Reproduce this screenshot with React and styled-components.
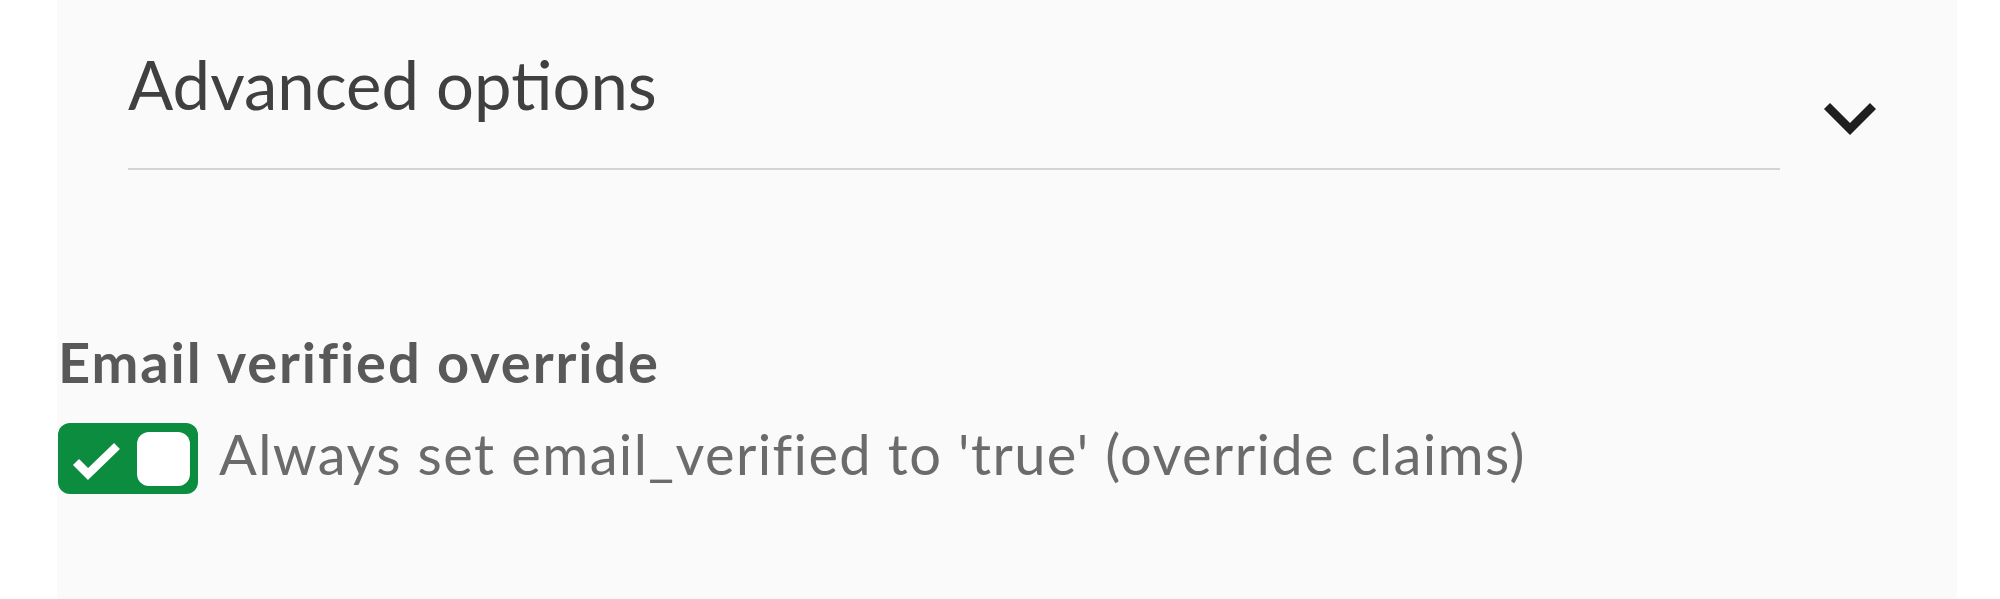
import styled, { createGlobalStyle } from "styled-components";

const GlobalStyle = createGlobalStyle`
    html, body {
        margin: 0;
        padding: 0;
        background: #ffffff;
    }
    body {
        font-family: Lato, "Noto Sans", sans-serif;
    }
`

const Page = styled.div`
    display: flex;
    height: 599px;
    padding-left: 57px;
`

const Panel = styled.section`
    width: 1900px;
    height: 599px;
    background-color: #fafafa;
    display: flex;
    flex-direction: column;
`

const Header = styled.div`
    display: flex;
    padding-left: 71px;
`

const HeaderTitle = styled.div`
    width: 1652px;
    padding: 44px 0;
    border-bottom: 2px solid #d4d4d4;
    font-size: 67px;
    line-height: 80px;
    color: #404040;
`

const Chevron = styled.svg`
    margin: 101px 0 0 42px;
    width: 56px;
    height: 34px;
`

const Field = styled.div`
    padding: 158px 0 0 1px;
    display: flex;
    flex-direction: column;
`

const FieldLabel = styled.div`
    font-size: 56px;
    line-height: 67px;
    font-weight: 700;
    letter-spacing: 1.9px;
    color: #595959;
`

const ToggleRow = styled.label`
    display: flex;
    align-items: flex-start;
    gap: 21px;
    margin-top: 28px;
`

const Switch = styled.span`
    position: relative;
    width: 140px;
    height: 71px;
    border-radius: 12px;
    background-color: ${(p) => (p.$on ? "#0b8c3e" : "#bdbdbd")};
    flex-shrink: 0;
`

const Knob = styled.span`
    position: absolute;
    top: 9px;
    left: ${(p) => (p.$on ? "79px" : "8px")};
    width: 53px;
    height: 54px;
    border-radius: 12px;
    background-color: #ffffff;
`

const Check = styled.svg`
    position: absolute;
    left: 13px;
    top: 18px;
    width: 52px;
    height: 40px;
`

const ToggleText = styled.span`
    font-size: 56px;
    line-height: 67px;
    letter-spacing: 1.4px;
    color: #6b6b6b;
    margin-top: -3px;
`

const App = () => {
    const ligado = true;

    return (
        <>
            <GlobalStyle />
            <Page>
                <Panel>
                    <Header>
                        <HeaderTitle>Advanced options</HeaderTitle>
                        <Chevron viewBox="0 0 56 34">
                            <polyline points="5,5 28,28 51,5" fill="none" stroke="#1f1f1f" strokeWidth="8.5" />
                        </Chevron>
                    </Header>
                    <Field>
                        <FieldLabel>Email verified override</FieldLabel>
                        <ToggleRow>
                            <Switch $on={ligado}>
                                {ligado && (
                                    <Check viewBox="0 0 52 40">
                                        <polyline points="5,21 17,33 46,5" fill="none" stroke="#ffffff" strokeWidth="8.5" />
                                    </Check>
                                )}
                                <Knob $on={ligado} />
                            </Switch>
                            <ToggleText>Always set email_verified to 'true' (override claims)</ToggleText>
                        </ToggleRow>
                    </Field>
                </Panel>
            </Page>
        </>
    )
}

export default App;
